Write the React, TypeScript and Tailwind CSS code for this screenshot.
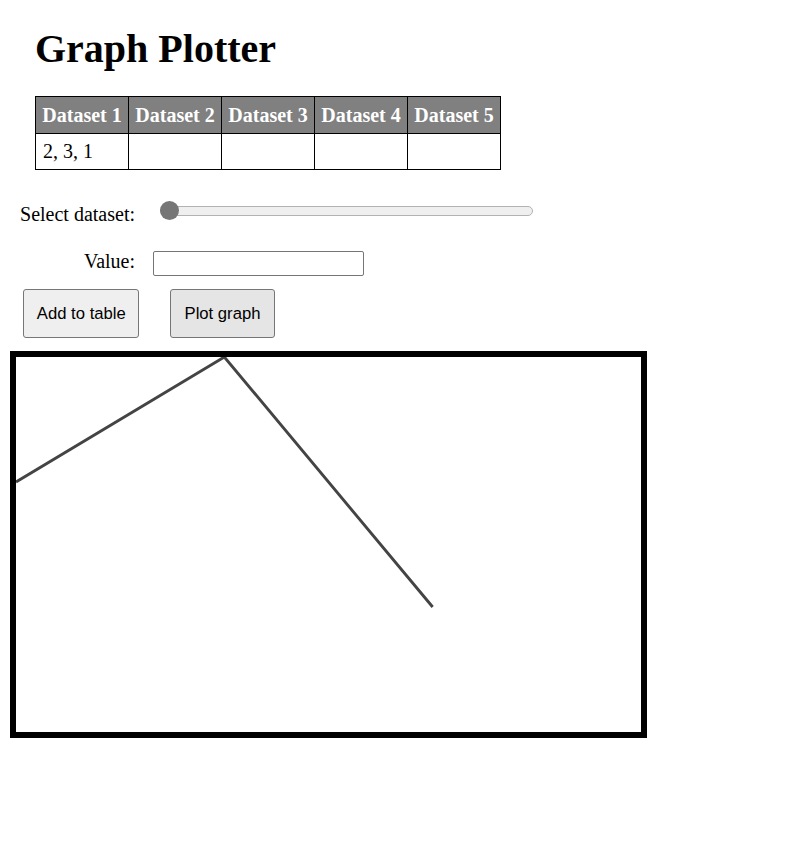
import React from "react";

export default function App() {
  const data = [2, 3, 1];
  const pts = data
    .map((v, i) => `${(i * 500) / 3},${300 - v * 100}`)
    .join(" ");
  return (
    <div className="p-[10px] font-['Liberation_Serif',serif] text-black bg-white min-h-[847px]">
      <h1 className="ml-[25px] mt-[15.5px] text-[40px] leading-[46px] font-bold">
        Graph Plotter
      </h1>
      <table className="ml-[25px] mt-[24.5px] border-collapse text-[20px] leading-[23px]">
        <thead>
          <tr>
            {[1, 2, 3, 4, 5].map((n) => (
              <th
                key={n}
                className="w-[93px] h-[37px] border border-black bg-[#808080] text-white font-bold px-[6px] py-0 text-center whitespace-nowrap"
              >
                Dataset {n}
              </th>
            ))}
          </tr>
        </thead>
        <tbody>
          <tr>
            <td className="h-[36px] border border-black px-[7px] py-0 text-left whitespace-nowrap">
              2, 3, 1
            </td>
            <td className="border border-black"></td>
            <td className="border border-black"></td>
            <td className="border border-black"></td>
            <td className="border border-black"></td>
          </tr>
        </tbody>
      </table>

      <div className="mt-[31px] flex items-start">
        <label className="w-[125px] text-right text-[20px] leading-[23px] mt-[1.6px]">
          Select dataset:
        </label>
        <div className="relative ml-[25px] w-[373px] h-[19px]">
          <div className="absolute left-0 right-0 top-[5px] h-[9.5px] rounded-full bg-[#efefef] border border-[#b2b2b2]"></div>
          <div className="absolute left-0 top-0 w-[19px] h-[19px] rounded-full bg-[#767676]"></div>
        </div>
      </div>

      <div className="mt-[24px] flex items-start">
        <label className="w-[125px] text-right text-[20px] leading-[23px]">
          Value:
        </label>
        <input
          type="text"
          className="ml-[18px] mt-[1.5px] w-[211px] h-[24.5px] border border-[#767676] rounded-[2px] bg-white outline-none"
        />
      </div>

      <div className="mt-[13.5px] flex items-start gap-[31px] ml-[13.3px] font-['Liberation_Sans',Arial,sans-serif] text-[16.67px] leading-[19px]">
        <button className="h-[48.6px] w-[116px] border border-[#767676] rounded-[3px] bg-[#efefef] text-black">
          Add to table
        </button>
        <button className="h-[48.6px] w-[104.4px] border border-[#767676] rounded-[3px] bg-[#e5e5e5] text-black">
          Plot graph
        </button>
      </div>

      <div className="mt-[13.5px] w-[637px] h-[387px] border-[6px] border-black bg-white overflow-hidden">
        <svg
          width="625"
          height="375"
          viewBox="0 0 500 300"
          preserveAspectRatio="none"
          className="block"
        >
          <polyline
            points={pts}
            fill="none"
            stroke="#444444"
            strokeWidth="2.3"
          />
        </svg>
      </div>
    </div>
  );
}
